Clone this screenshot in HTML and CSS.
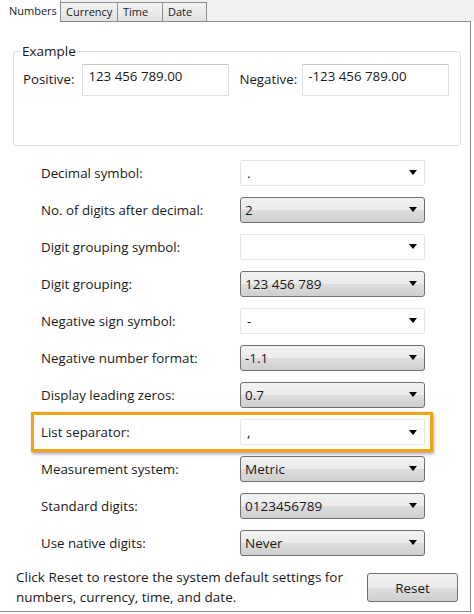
FILE: index.html
```html
<!DOCTYPE html>
<html lang="en">

<head>
    <meta charset="UTF-8">
    <title>Customize Format - Numbers</title>
    <link rel="stylesheet" href="styles.css">
</head>

<body>
    <div class="dialog">
        <div class="tabs">
            <div class="tab active">Numbers</div>
            <div class="tab currency">Currency</div>
            <div class="tab time">Time</div>
            <div class="tab date">Date</div>
        </div>
        <div class="panel">
            <fieldset class="example">
                <legend>Example</legend>
                <div class="sample">
                    <span class="sample-label">Positive:</span>
                    <div class="sample-box">123 456 789.00</div>
                    <span class="sample-label neg">Negative:</span>
                    <div class="sample-box neg">-123 456 789.00</div>
                </div>
            </fieldset>

            <div class="settings">
                <div class="row">
                    <span class="label">Decimal symbol:</span>
                    <div class="combo edit"><span>.</span><i class="arrow"></i></div>
                </div>
                <div class="row">
                    <span class="label">No. of digits after decimal:</span>
                    <div class="combo"><span>2</span><i class="arrow"></i></div>
                </div>
                <div class="row">
                    <span class="label">Digit grouping symbol:</span>
                    <div class="combo edit"><span></span><i class="arrow"></i></div>
                </div>
                <div class="row">
                    <span class="label">Digit grouping:</span>
                    <div class="combo"><span>123 456 789</span><i class="arrow"></i></div>
                </div>
                <div class="row">
                    <span class="label">Negative sign symbol:</span>
                    <div class="combo edit"><span>-</span><i class="arrow"></i></div>
                </div>
                <div class="row">
                    <span class="label">Negative number format:</span>
                    <div class="combo"><span>-1.1</span><i class="arrow"></i></div>
                </div>
                <div class="row">
                    <span class="label">Display leading zeros:</span>
                    <div class="combo"><span>0.7</span><i class="arrow"></i></div>
                </div>
                <div class="row highlight">
                    <span class="label">List separator:</span>
                    <div class="combo edit"><span>,</span><i class="arrow"></i></div>
                </div>
                <div class="row">
                    <span class="label">Measurement system:</span>
                    <div class="combo"><span>Metric</span><i class="arrow"></i></div>
                </div>
                <div class="row">
                    <span class="label">Standard digits:</span>
                    <div class="combo"><span>0123456789</span><i class="arrow"></i></div>
                </div>
                <div class="row">
                    <span class="label">Use native digits:</span>
                    <div class="combo"><span>Never</span><i class="arrow"></i></div>
                </div>
            </div>

            <div class="footer">
                <p>Click Reset to restore the system default settings for numbers, currency, time, and date.</p>
                <button class="reset">Reset</button>
            </div>
        </div>
    </div>
</body>

</html>
```

FILE: styles.css
```css
body {
    margin: 0;
    background: #fff;
    font-family: "Open Sans", "Noto Sans", sans-serif;
    font-size: 13.3px;
    color: #1a1a1a;
}
.dialog {
    width: 472px;
    margin-left: -1px;
}
.tabs {
    display: flex;
    align-items: flex-end;
    height: 21px;
    background: #f0f0f0;
    width: 475px;
}
.tab {
    height: 19px;
    line-height: 18px;
    padding: 0 0 0 5px;
    font-size: 11px;
    border: 1px solid #8e8f8f;
    border-bottom: none;
    border-left: none;
    background: linear-gradient(#f4f4f4, #e2e2e2);
    box-sizing: border-box;
}
.tab.currency {
    width: 57px;
}
.tab.time {
    width: 45px;
}
.tab.date {
    width: 44px;
}
.tab.active {
    width: 62px;
    height: 22px;
    margin-bottom: -1px;
    padding-left: 9px;
    background: #fff;
    line-height: 20px;
    border-left: 1px solid #8e8f8f;
    border-color: transparent #8e8f8f;
}
.panel {
    height: 591px;
    border: 1px solid #898c95;
    box-sizing: border-box;
    padding-top: 20px;
}
.example {
    margin: 0 9px 0 13px;
    padding: 4px 8px 0 9px;
    height: 104px;
    box-sizing: border-box;
    border: 1px solid #d5dfe5;
    border-radius: 3px;
}
.example legend {
    padding: 0 1px;
    margin-left: -2px;
    font-size: 13.5px;
}
.sample {
    display: flex;
    align-items: flex-start;
}
.sample-label {
    margin-top: 6px;
}
.sample-label.neg {
    margin-left: 10px;
}
.sample-box {
    width: 147px;
    height: 32px;
    margin-left: 8px;
    padding: 2px 5px;
    box-sizing: border-box;
    border: 1px solid #dde0e4;
    border-top-color: #c7c9cd;
}
.sample-box.neg {
    margin-left: 5px;
}
.settings {
    padding: 8px 37px 0 31px;
}
.row {
    display: flex;
    align-items: center;
    justify-content: space-between;
    height: 37px;
    padding: 0 5px 0 7px;
    box-sizing: border-box;
    border: 3px solid transparent;
    border-width: 0 3px;
}
.row.highlight {
    height: 40px;
    margin: -1px 0 -2px;
    border: 3px solid #f2a316;
    box-shadow: 1px 2px 3px rgba(0, 0, 0, 0.35);
}
.combo {
    width: 185px;
    height: 26px;
    display: flex;
    align-items: center;
    justify-content: space-between;
    padding: 0 5px 0 4px;
    box-sizing: border-box;
    border: 1px solid #707070;
    border-radius: 3px;
    background: linear-gradient(#f2f2f2 0%, #ebebeb 50%, #dddddd 51%, #cfcfcf 100%);
    font-size: 13.5px;
}
.combo.edit {
    border: 1px solid #e2e6ea;
    border-radius: 2px;
    background: #fff;
    padding-left: 6px;
}
.arrow {
    width: 0;
    height: 0;
    border-left: 4.5px solid transparent;
    border-right: 4.5px solid transparent;
    border-top: 5px solid #000;
    margin-right: 2px;
}
.footer {
    display: flex;
    align-items: center;
    justify-content: space-between;
    padding: 6px 12px 0 16px;
}
.footer p {
    margin: 0;
    width: 330px;
    line-height: 20px;
    font-size: 13.5px;
}
.reset {
    width: 91px;
    height: 29px;
    margin-top: 1px;
    border: 1px solid #707070;
    border-radius: 3px;
    background: linear-gradient(#f2f2f2 0%, #ebebeb 50%, #dddddd 51%, #cfcfcf 100%);
    font-family: inherit;
    font-size: 13.5px;
    color: #1a1a1a;
}
```
